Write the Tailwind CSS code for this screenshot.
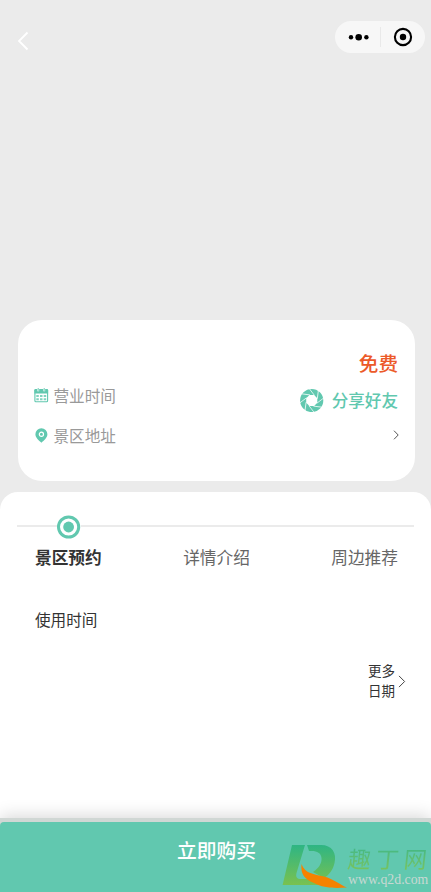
<!DOCTYPE html>
<html lang="zh-CN">
<head>
<meta charset="utf-8">
<meta name="viewport" content="width=device-width, initial-scale=1">
<title>景区预约</title>
<script src="https://cdn.jsdelivr.net/npm/@tailwindcss/browser@4"></script>
</head>
<body class="bg-[#ebebeb] font-['Noto_Sans_CJK_SC',sans-serif] text-[#333]">
<div class="flex h-[892px] w-full flex-col overflow-hidden">
  <header class="flex h-[320px] shrink-0 items-start justify-between pt-[21px] pr-[6px] pl-[17px]">
    <svg class="mt-[10px] h-5 w-3" viewBox="0 0 12 20" fill="none" stroke="#fff" stroke-width="1.8"><path d="M10.5 1.5 2 10l8.500 8.500"/></svg>
    <div class="flex h-8 w-[90px] items-center rounded-full bg-[#f7f7f7]">
      <svg class="h-8 w-[45px]" viewBox="0 0 45 32"><circle cx="16" cy="16.300" r="2.200"/><circle cx="23.700" cy="16.300" r="3.300"/><circle cx="31.400" cy="16.300" r="2.200"/></svg>
      <div class="h-[20px] w-px bg-[#e9e9e9]"></div>
      <svg class="h-8 w-[44px]" viewBox="0 0 44 32"><circle cx="22" cy="16" r="8.100" fill="none" stroke="#000" stroke-width="2.100"/><circle cx="22" cy="16" r="3.200"/></svg>
    </div>
  </header>

  <section class="mr-4 ml-[18px] flex h-[161px] shrink-0 flex-col rounded-[24px] bg-white pt-[29px] pr-[17px] pl-4">
    <div class="h-[28px] text-right text-[19.600px] leading-[28px] font-medium text-[#ec5a29]">免费</div>
    <div class="flex h-[45px] items-center justify-between">
      <div class="flex items-center pb-[10px] text-[15.600px] leading-6 text-[#999]">
        <svg class="mt-[2px] mr-[4.500px] h-[15px] w-[15px]" viewBox="0 0 15 15">
          <rect x=".9" y="1.500" width="12.700" height="12.200" rx="1" fill="#fff" stroke="#61c8af" stroke-width="1.100"/>
          <path d="M.4 5.500V2.200q0-1.200 1.200-1.200h11.300q1.200 0 1.200 1.200v3.300z" fill="#61c8af"/>
          <path d="M4.200 0v3.200M10.200 0v3.200" stroke="#fff" stroke-width="1.900"/><path d="M4.200 0v2.900M10.200 0v2.900" stroke="#61c8af" stroke-width=".9"/>
          <path d="M2.300 7h2.500v2H2.300zM6 7h2.500v2H6zM9.700 7h2.500v2H9.700zM2.300 10.200h2.500v2H2.300zM6 10.200h2.500v2H6zM9.700 10.200h2.500v2H9.700z" fill="#61c8af" fill-opacity=".8"/>
        </svg>
        <span>营业时间</span>
      </div>
      <div class="flex items-center text-[16.600px] leading-6 font-medium text-[#61c8af]">
        <svg class="mr-[8px] h-6 w-6" viewBox="-12 -12.500 24 24">
          <path d="M-.3-11.600A11.600 11.600 0 1 1-.3 11.600A11.600 11.600 0 1 1-.3-11.600zM2.100-5.600 5.300-2.300V2.300L2.100 5.600H-2.500L-5.800 2.300V-2.300L-2.500-5.600z" fill="#61c8af" fill-rule="evenodd"/>
          <g stroke="#fff" stroke-width=".75" transform="translate(-.3 0)">
            <path id="blade" d="M-2.500 -12 2.700 -5.200"/>
            <use href="#blade" transform="rotate(45)"/><use href="#blade" transform="rotate(90)"/><use href="#blade" transform="rotate(135)"/><use href="#blade" transform="rotate(180)"/><use href="#blade" transform="rotate(225)"/><use href="#blade" transform="rotate(270)"/><use href="#blade" transform="rotate(315)"/>
          </g>
        </svg>
        <span>分享好友</span>
      </div>
    </div>
    <div class="flex h-[25px] items-center justify-between">
      <div class="flex items-center text-[15.600px] leading-6 text-[#999]">
        <svg class="mt-[2px] mr-[4.500px] h-[15px] w-[15px]" viewBox="0 0 15 15"><path d="M7.400.3a6 6 0 0 0-6 6c0 3.400 3.500 6.200 6 8.500 2.500-2.300 6-5.100 6-8.500a6 6 0 0 0-6-6z" fill="#61c8af"/><circle cx="7.400" cy="6.300" r="2.100" fill="none" stroke="#fff" stroke-width="1.200"/></svg>
        <span>景区地址</span>
      </div>
      <svg class="-mr-[1px] h-[10px] w-[6px]" viewBox="0 0 6 10" fill="none" stroke="#555" stroke-width="1"><path d="M1 .7 5.200 5 1 9.300"/></svg>
    </div>
  </section>

  <main class="mt-[11px] flex h-[326px] shrink-0 flex-col rounded-t-[18px] bg-white">
    <div class="mt-[23px] mr-[17px] ml-[17px] flex h-6 items-center">
      <div class="h-[2px] w-[40px] -translate-y-px bg-[#ebebeb]"></div>
      <svg class="h-6 w-6 shrink-0" viewBox="0 0 24 24"><circle cx="11.600" cy="12" r="10.100" fill="#fff" stroke="#61c8af" stroke-width="3"/><circle cx="11.600" cy="12" r="5.400" fill="#61c8af"/></svg>
      <div class="h-[2px] flex-1 -translate-y-px bg-[#ebebeb]"></div>
    </div>
    <nav class="mt-[6px] flex justify-between pr-[33px] pl-[35px] text-[16.700px] leading-6 text-[#666]">
      <span class="font-bold text-[#333]">景区预约</span>
      <span>详情介绍</span>
      <span>周边推荐</span>
    </nav>
    <h2 class="mt-[38px] pl-[35px] text-[15.600px] leading-6">使用时间</h2>
    <div class="mt-[29px] flex items-center justify-end pr-[25.500px]">
      <div class="w-[27px] text-[13.500px] leading-[20px]">更多<br>日期</div>
      <svg class="mt-[2px] ml-[2.500px] h-[13px] w-2" viewBox="0 0 8 13" fill="none" stroke="#444" stroke-width="1"><path d="M1 .9 6.600 6.500 1 12.100"/></svg>
    </div>
  </main>

  <footer class="relative h-[74px] shrink-0 bg-[#d0d7d4] pt-1 shadow-[0_-2px_16px_rgba(0,0,0,0.16)]">
    <div class="flex h-[70px] justify-center rounded-t-[4px] bg-[#61c8af] pt-[13px] pl-[2px] text-[19.800px] leading-[30px] font-medium text-white">立即购买</div>
    <div class="absolute top-[26px] left-[282px] flex">
      <svg class="h-[46px] w-[66px] shrink-0" viewBox="0 0 66 46">
        <defs><linearGradient id="leaf" x1="0" y1="0" x2="0" y2="44" gradientUnits="userSpaceOnUse"><stop stop-color="#2cb585"/><stop offset="1" stop-color="#7fc24c"/></linearGradient></defs>
        <path d="M10 1H23L14.500 29C13.500 33 15 35 19 35H30L46 41H.6z" fill="url(#leaf)"/>
        <path d="M25 1H39C50 1 55 9 52.500 19C51 26 47 31 42 34L31 28C37 24 40 19 39.500 14C39 9 35 7 30 7H27z" fill="url(#leaf)"/>
        <path d="M19.500 20C23 30 32 30 42 32.500C52 35 58 41 65 43.500C52 44.500 41 44 32 39C22 35 18.500 30 19.500 20z" fill="#f58200"/>
      </svg>
      <div class="w-[79px]">
        <div class="flex justify-between text-[23px] leading-[28px] font-normal text-transparent">
          <span class="-skew-x-6 bg-linear-to-b from-[#35b68a] to-[#7bc458] bg-clip-text">趣</span>
          <span class="-skew-x-6 bg-linear-to-b from-[#35b68a] to-[#7bc458] bg-clip-text">丁</span>
          <span class="-skew-x-6 bg-linear-to-b from-[#35b68a] to-[#7bc458] bg-clip-text">网</span>
        </div>
        <div class="-mt-[1px] font-['Liberation_Serif',serif] text-[13.800px] leading-[18px] whitespace-nowrap text-[#c8d8d3]">www.q2d.com</div>
      </div>
    </div>
  </footer>
</div>
</body>
</html>
